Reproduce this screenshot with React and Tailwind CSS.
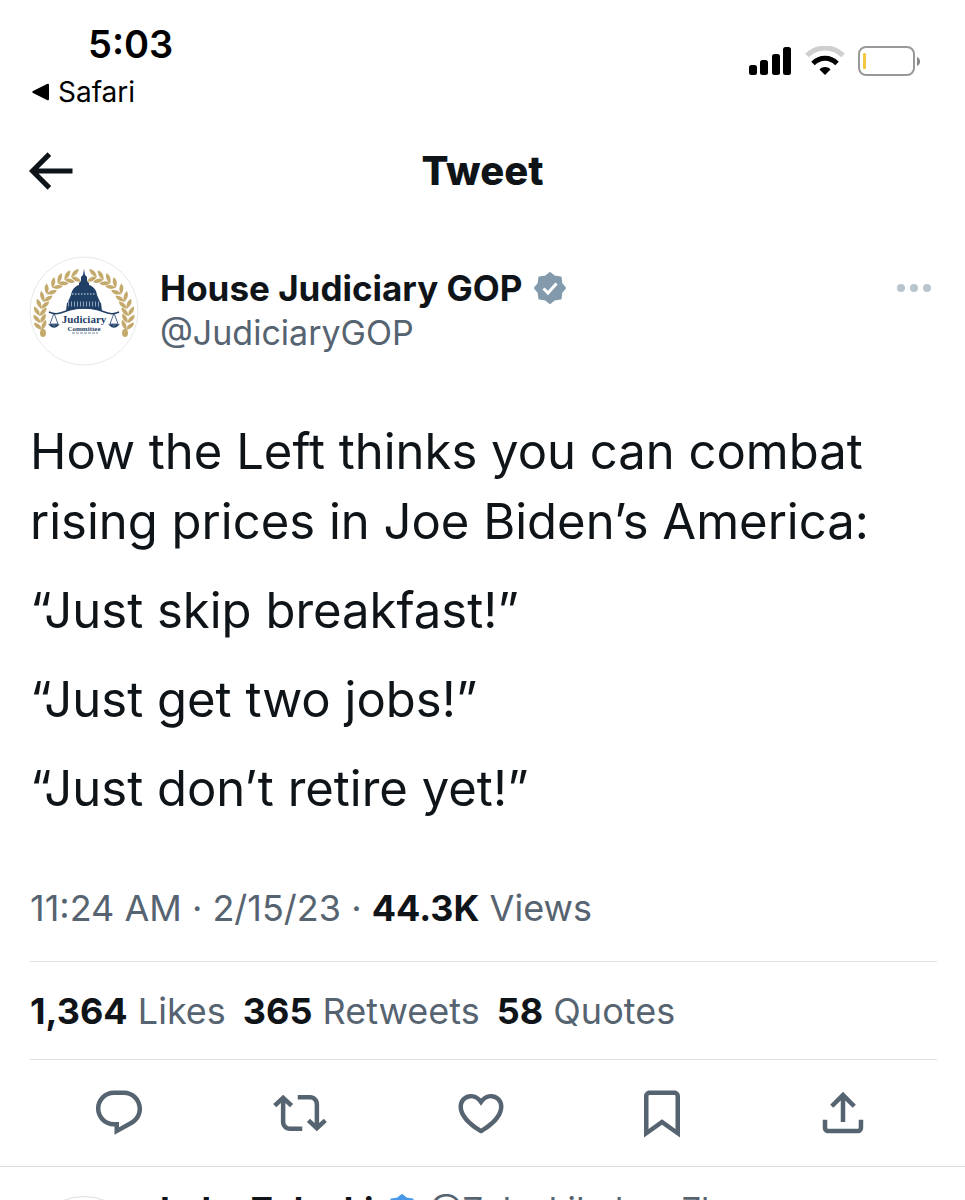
import React from 'react';

const actions = [
  {
    name: 'Reply',
    path: 'M1.751 10c0-4.42 3.584-8 8.005-8h4.366c4.49 0 8.129 3.64 8.129 8.13 0 2.96-1.607 5.68-4.196 7.11l-8.054 4.46v-3.69h-.067c-4.49.1-8.183-3.51-8.183-8.01zm8.005-6c-3.317 0-6.005 2.69-6.005 6 0 3.37 2.77 6.08 6.138 6.01l.351-.01h1.761v2.3l5.087-2.81c1.951-1.08 3.163-3.13 3.163-5.36 0-3.39-2.744-6.13-6.129-6.13H9.756z',
  },
  {
    name: 'Retweet',
    path: 'M4.5 3.88l4.432 4.14-1.364 1.46L5.5 7.55V16c0 1.1.896 2 2 2H13v2H7.5c-2.209 0-4-1.79-4-4V7.55L1.432 9.48.068 8.02 4.5 3.88zM16.5 6H11V4h5.5c2.209 0 4 1.79 4 4v8.45l2.068-1.93 1.364 1.46-4.432 4.14-4.432-4.14 1.364-1.46 2.068 1.93V8c0-1.1-.896-2-2-2z',
  },
  {
    name: 'Like',
    path: 'M16.697 5.5c-1.222-.06-2.679.51-3.89 2.16l-.805 1.09-.806-1.09C9.984 6.01 8.526 5.44 7.304 5.5c-1.243.07-2.349.78-2.91 1.91-.552 1.12-.633 2.78.479 4.82 1.074 1.97 3.257 4.27 7.129 6.61 3.87-2.34 6.052-4.64 7.126-6.61 1.111-2.04 1.03-3.7.477-4.82-.561-1.13-1.666-1.84-2.908-1.91zm4.187 7.69c-1.351 2.48-4.001 5.12-8.379 7.67l-.503.3-.504-.3c-4.379-2.55-7.029-5.19-8.382-7.67-1.36-2.5-1.41-4.86-.514-6.67.887-1.79 2.647-2.91 4.601-3.01 1.651-.09 3.368.56 4.798 2.01 1.429-1.45 3.146-2.1 4.796-2.01 1.954.1 3.714 1.22 4.601 3.01.896 1.81.846 4.17-.514 6.67z',
  },
  {
    name: 'Bookmark',
    path: 'M4 4.5C4 3.12 5.119 2 6.5 2h11C18.881 2 20 3.12 20 4.5v18.44l-8-5.71-8 5.71V4.5zM6.5 4c-.276 0-.5.22-.5.5v14.56l6-4.29 6 4.29V4.5c0-.28-.224-.5-.5-.5h-11z',
  },
  {
    name: 'Share',
    path: 'M12 2.59l5.7 5.7-1.41 1.42L13 6.41V16h-2V6.41l-3.3 3.3-1.41-1.42L12 2.59zM21 15l-.02 3.51c0 1.38-1.12 2.49-2.5 2.49H5.5C4.11 21 3 19.88 3 18.5V15h2v3.5c0 .28.22.5.5.5h12.98c.28 0 .5-.22.5-.5L19 15h2z',
  },
];

const quotes = ['“Just skip breakfast!”', '“Just get two jobs!”', '“Just don’t retire yet!”'];

const stats = [
  { count: '1,364', label: 'Likes' },
  { count: '365', label: 'Retweets' },
  { count: '58', label: 'Quotes' },
];

// [x, y, angle] of each leaf on the left branch of the wreath
const leaves = [
  [46, 20, 80], [39, 22, 68], [32, 25, 56], [26, 29, 46], [20, 35, 34],
  [16, 42, 22], [13, 49, 12], [11, 56, 4], [11, 63, -6], [12, 70, -14],
];

const Branch = () => (
  <g fill="#c4a96c">
    {leaves.map(([x, y, angle]) => (
      <g key={`${x}-${y}`} transform={`translate(${x} ${y}) rotate(${angle})`}>
        <path d="M0 4C-5 2-7-2-6-5C-2-3 0-1 0 4z" />
        <path d="M0 4C5 2 7-2 6-5C2-3 0-1 0 4z" />
      </g>
    ))}
    <ellipse cx="14" cy="77" rx="3" ry="4" />
  </g>
);

const Avatar = () => (
  <svg viewBox="0 0 110 110" className="size-[110px] shrink-0" role="img" aria-label="House Judiciary GOP">
    <circle cx="55" cy="55" r="54" fill="#fff" stroke="#e6e9ec" />
    <Branch />
    <g transform="translate(110 0) scale(-1 1)">
      <Branch />
    </g>
    <g fill="#1f3f66">
      <path d="M55 13l1 6 2 2v4l2 2v3H50v-3l2-2v-4l2-2z" />
      <path d="M42 39c1-7 6-11 13-11s12 4 13 11z" />
      <path d="M42 39h26l4 9H38z" />
      <path d="M38 47h34l1 8c-12-3-24-3-36 0z" />
    </g>
    <path d="M43 38h24" stroke="#9fb2c6" strokeWidth="1.500" strokeDasharray="1.5 1.5" />
    <path d="M39 48h32" stroke="#8fa4bb" strokeWidth="5" strokeDasharray="1 2" />
    <g fill="none" stroke="#1f3f66">
      <path d="M20 56c8 4 14 0 20-2 10-3 20-3 30 0 6 2 12 6 20 2" strokeWidth="1.5" />
      <path d="M25 57l-4 11h8zM85 57l-4 11h8z" strokeWidth=".8" />
      <path d="M21 69q4 4 8 0zM81 69q4 4 8 0z" strokeWidth="1.5" />
      <path d="M43 77h26" stroke="#6f86a0" strokeWidth="1" strokeDasharray="3 1" />
    </g>
    <g fill="#1f3f66" fontFamily="Liberation Serif, serif" fontWeight="700" textAnchor="middle">
      <text x="55" y="67" fontSize="11">Judiciary</text>
      <text x="55" y="75" fontSize="7">Committee</text>
    </g>
  </svg>
);

const VerifiedBadge = ({ className }) => (
  <svg viewBox="0 0 34 34" className={className} role="img" aria-label="Verified account">
    <path
      d="M17 2l4.400 3.600 6.200.8.800 6.200L32 17l-3.600 4.400-.8 6.200-6.200.8L17 32l-4.400-3.600-6.200-.8-.8-6.200L2 17l3.600-4.400.8-6.200 6.200-.8z"
      fill="currentColor"
      stroke="currentColor"
      strokeWidth="2"
      strokeLinejoin="round"
    />
    <path d="M10.500 17.500l4.500 4.500 8.500-9.500" fill="none" stroke="#fff" strokeWidth="3" />
  </svg>
);

const StatusBar = () => (
  <div className="flex justify-between pl-8 pr-11 pt-5 text-black">
    <div>
      <p className="ml-14 text-[38px] font-semibold leading-[48px]">5:03</p>
      <a href="#safari" className="flex items-center gap-2 text-[28px] leading-[48px]">
        <svg viewBox="0 0 18 18" className="size-[18px]" fill="currentColor">
          <path d="M1 8L15 1q2-1 2 1v14q0 2-2 1L1 10q-1.500-1 0-2z" />
        </svg>
        Safari
      </a>
    </div>
    <div className="flex h-[82px] items-center gap-[13px]">
      <svg viewBox="0 0 44 30" className="h-[30px] w-11">
        <rect x="1" y="19" width="8" height="10" rx="2.500" />
        <rect x="12" y="14" width="8" height="15" rx="2.500" />
        <rect x="24" y="8" width="8" height="21" rx="2.500" />
        <rect x="35" y="1" width="8" height="28" rx="2.500" />
      </svg>
      <svg viewBox="0 0 40 30" className="h-[30px] w-10" fill="none">
        <path d="M2 9.500C12-.5 28-.5 38 9.500" stroke="#cfcfcf" strokeWidth="5" />
        <path d="M8 17.500c7-7 17-7 24 0" stroke="#000" strokeWidth="5" />
        <path d="M20 29l-5.500-5.500c3-3.200 8-3.200 11 0z" fill="#000" />
      </svg>
      <svg viewBox="0 0 63 30" className="h-[30px] w-[63px]" fill="none">
        <rect x="1" y="1" width="55" height="28" rx="7" stroke="#999" strokeWidth="2" />
        <rect x="5" y="7" width="3" height="16" rx="1" fill="#f5c842" />
        <path d="M59 11c4 1 4 8 0 9z" fill="#888" />
      </svg>
    </div>
  </div>
);

const App = () => {
  return (
    <div className="h-screen overflow-hidden bg-white font-['Inter',sans-serif] text-[#0f1419]">
      <StatusBar />

      <header className="mt-[13px] grid grid-cols-3 items-center px-5">
        <button type="button" aria-label="Back" className="justify-self-start">
          <svg viewBox="0 0 24 24" className="size-[60px]" fill="currentColor">
            <path d="M7.414 13l5.043 5.04-1.414 1.42L3.586 12l7.457-7.460 1.414 1.420L7.414 11H21v2H7.414z" />
          </svg>
        </button>
        <h1 className="text-center text-[40px] font-extrabold leading-[84px]">Tweet</h1>
      </header>

      <article>
        <div className="flex items-start gap-[21px] pl-[29px] pr-[34px] pt-[43px]">
          <Avatar />
          <div className="grow pt-[10px]">
            <div className="flex items-center gap-[11px]">
              <h2 className="text-[35px] font-bold leading-[44px]">House Judiciary GOP</h2>
              <VerifiedBadge className="size-[34px] text-[#829aab]" />
            </div>
            <p className="text-[34px] leading-[46px] text-[#566370]">@JudiciaryGOP</p>
          </div>
          <button type="button" aria-label="More" className="flex gap-[5px] pt-7">
            <span className="size-2 rounded-full bg-[#b9c5cd]" />
            <span className="size-2 rounded-full bg-[#b9c5cd]" />
            <span className="size-2 rounded-full bg-[#b9c5cd]" />
          </button>
        </div>

        <div className="mt-[51px] space-y-[19px] pl-[30px] pr-7 text-[49px] leading-[70px]">
          <p>How the Left thinks you can combat rising prices in Joe Biden’s America:</p>
          {quotes.map((quote) => (
            <p key={quote}>{quote}</p>
          ))}
        </div>

        <div className="ml-[30px] mr-7 mt-[58px] text-[36px] text-[#566370]">
          <p className="border-b border-[#dde2e6] pb-[27px] leading-[52px]">
            11:24 AM · 2/15/23 · <b className="text-[#0f1419]">44.3K</b> Views
          </p>
          <div className="flex gap-[17px] border-b border-[#dde2e6] pb-[22px] pt-[23px] leading-[52px]">
            {stats.map(({ count, label }) => (
              <a key={label} href={`#${label}`}>
                <b className="text-[#0f1419]">{count}</b> {label}
              </a>
            ))}
          </div>
        </div>

        <div className="grid grid-cols-5 border-b border-[#d9dee2] py-[26px] pl-7 pr-8 text-[#566370]">
          {actions.map(({ name, path }) => (
            <button key={name} type="button" aria-label={name} className="justify-self-center">
              <svg viewBox="0 0 24 24" className="size-[54px]" fill="currentColor">
                <path d={path} />
              </svg>
            </button>
          ))}
        </div>
      </article>

      <article className="flex gap-[21px] pl-[29px] pt-[29px]">
        <div className="size-[110px] shrink-0 rounded-full border border-[#d9dee2]" />
        <div className="flex h-7 items-center gap-[11px] self-start whitespace-nowrap leading-[28px]">
          <h2 className="text-[35px] font-bold">Luke Zaleski</h2>
          <VerifiedBadge className="size-[34px] text-[#4a99e9]" />
          <p className="text-[34px] text-[#566370]">@ZaleskiLuke · 7h</p>
        </div>
      </article>
    </div>
  );
};

export default App;
